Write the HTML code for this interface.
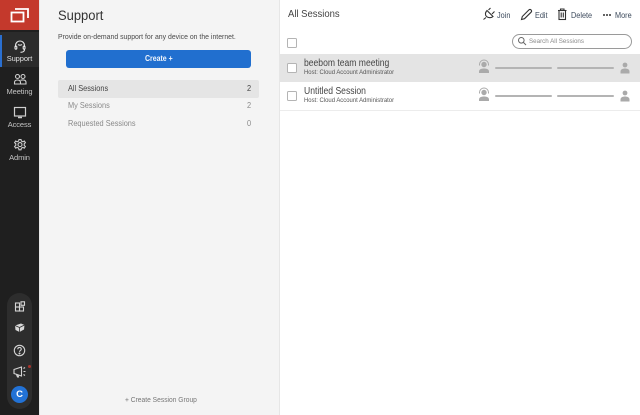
<!DOCTYPE html>
<html>
<head>
<meta charset="utf-8">
<style>
html,body{margin:0;padding:0;width:640px;height:415px;overflow:hidden;background:#fff;font-family:"Liberation Sans",sans-serif;}
.a{position:absolute;white-space:nowrap;transform-origin:0 50%;}
svg{position:absolute;overflow:visible;}
.nl{color:#c4c4c4;font-size:7.500px;letter-spacing:-.1px;width:39px;text-align:center;left:0;line-height:10px;font-weight:400;}
.lt{font-size:8.200px;line-height:10px;transform:scaleX(.9);}
.cb{position:absolute;width:8px;height:8px;border:1px solid #b4b4b4;border-radius:1.500px;background:#fff;left:286.500px;}
.ln{position:absolute;height:2px;background:#b4b4b4;border-radius:1px;}
.act{color:#3c4a5c;font-size:8.300px;line-height:10px;transform:scaleX(.88);}
.tt{font-size:9.700px;line-height:12px;color:#444;left:304px;transform:scaleX(.885);}
.ht{font-size:6.600px;line-height:8px;color:#555;left:304px;transform:scaleX(.9);}
</style>
</head>
<body>
<!-- sidebar -->
<div class="a" style="left:0;top:0;width:39px;height:415px;background:#1f1f1f;"></div>
<div class="a" style="left:0;top:0;width:39px;height:30px;background:#c4392c;"></div>
<svg style="left:0;top:0" width="39" height="30" fill="none" stroke="#fff" stroke-width="1.800">
<rect x="11.500" y="12.500" width="12" height="9"/>
<path d="M15 9H28V18"/>
</svg>
<div class="a" style="left:0;top:32px;width:39px;height:35px;background:#2b2b2b;"></div>
<div class="a" style="left:0;top:35px;width:2px;height:32px;background:#2a6fd0;"></div>

<svg style="left:13px;top:40px" width="14" height="14" fill="none" stroke="#e8e8e8" stroke-width="1.100">
<path d="M2.500 7V5.500a4.500 4.500 0 0 1 9 0V7"/>
<rect x="2" y="6" width="1.800" height="3.200" rx=".9"/>
<rect x="10.200" y="6" width="1.800" height="3.200" rx=".9"/>
<path d="M5 4.500c1 .9 3 .9 4 0M11.500 9.500c0 2-2 2.800-4 2.800"/>
</svg>
<div class="a nl" style="top:54px;color:#e0e0e0;">Support</div>

<svg style="left:13px;top:73px" width="14" height="14" fill="none" stroke="#cfcfcf" stroke-width="1.100">
<circle cx="4.500" cy="3.500" r="2"/><circle cx="10" cy="3.500" r="2"/>
<path d="M1.500 11V9.500c0-1.500 1-2.500 3-2.500s3 1 3 2.500V11zM7.500 7.300c.7-.3 1.500-.4 2.500-.4 2 0 3 1 3 2.500V11H7.500"/>
</svg>
<div class="a nl" style="top:87px;">Meeting</div>

<svg style="left:13px;top:106px" width="14" height="14" fill="none" stroke="#cfcfcf" stroke-width="1.200">
<rect x="1.500" y="1.500" width="11" height="8.500"/>
<path d="M5 11.500H9" stroke-width="1.500"/>
</svg>
<div class="a nl" style="top:120px;">Access</div>

<svg style="left:13px;top:138px" width="14" height="14" fill="none" stroke="#cfcfcf" stroke-width="1.100">
<path d="M6 1.500H8L8.400 3.100L9.900 3.800L11.300 3L12.400 4.700L11.200 5.800V7.400L12.400 8.500L11.300 10.200L9.900 9.400L8.400 10.100L8 11.800H6L5.600 10.100L4.100 9.400L2.700 10.200L1.600 8.500L2.800 7.400V5.800L1.600 4.700L2.700 3L4.100 3.800L5.600 3.100Z"/>
<circle cx="7" cy="6.600" r="2"/>
</svg>
<div class="a nl" style="top:153px;">Admin</div>

<div class="a" style="left:7px;top:293px;width:25px;height:116px;background:#2d2d2d;border-radius:12.500px;"></div>
<svg style="left:14px;top:301px" width="12" height="12" fill="none" stroke="#d4d4d4" stroke-width="1.100">
<rect x="1.500" y="6" width="4" height="4"/><rect x="5.500" y="6" width="4" height="4"/><rect x="1.500" y="2" width="4" height="4"/><rect x="7" y=".8" width="3.500" height="3.500"/>
</svg>
<svg style="left:14px;top:322px" width="12" height="12">
<path d="M1 3.500L7 1.500L10.500 3L10 7.500L5.500 10L1.500 8Z" fill="#d8d8d8"/>
<path d="M1 3.500L5.500 5.500V10M5.500 5.500L10.500 3" stroke="#2d2d2d" stroke-width=".8" fill="none"/>
</svg>
<svg style="left:13px;top:344px" width="13" height="13" fill="none" stroke="#d4d4d4" stroke-width="1.100">
<circle cx="6.500" cy="6.500" r="5.200"/>
<path d="M4.800 5.200c0-2.300 3.500-2.300 3.500-.1 0 1.300-1.800 1.400-1.800 2.800"/>
<circle cx="6.500" cy="9.500" r=".5" fill="#d4d4d4"/>
</svg>
<svg style="left:13px;top:365px" width="14" height="14" fill="none" stroke="#d4d4d4" stroke-width="1.100">
<path d="M1 4.500L8.500 2V11L1 8.500Z"/>
<path d="M3.500 9.500L4.500 12H5.500L5 10"/>
<path d="M10.500 3.500L12 2.500M10.500 6.500H12.500M10.500 9.500L12 10.500"/>
</svg>
<div class="a" style="left:28px;top:364.500px;width:3px;height:3px;border-radius:50%;background:#a8352c;"></div>
<div class="a" style="left:11px;top:386px;width:17px;height:17px;border-radius:50%;background:#2272d6;color:#fff;font-size:9.500px;font-weight:bold;line-height:17px;text-align:center;">C</div>

<!-- left panel -->
<div class="a" style="left:39px;top:0;width:1px;height:415px;background:#e8e8e8;"></div>
<div class="a" style="left:40px;top:0;width:239px;height:415px;background:#f4f4f4;"></div>
<div class="a" style="left:279px;top:0;width:1px;height:415px;background:#e6e6e6;"></div>
<div class="a" style="left:58px;top:7.500px;font-size:13.500px;transform:scaleX(.96);line-height:16px;color:#333;">Support</div>
<div class="a" style="left:58px;top:31.500px;font-size:7.600px;transform:scaleX(.908);line-height:10px;color:#4a4a4a;">Provide on-demand support for any device on the internet.</div>
<div class="a" style="left:66px;top:50px;width:185px;height:18px;background:#216fcf;border-radius:3px;"></div>
<div class="a" style="left:145px;top:50px;font-size:8.200px;transform:scaleX(.85);font-weight:bold;line-height:18px;color:#f2f6fc;">Create +</div>
<div class="a" style="left:58px;top:80px;width:201px;height:18px;background:#e5e5e5;border-radius:2px;"></div>
<div class="a lt" style="left:68px;top:84px;color:#444;">All Sessions</div>
<div class="a lt" style="left:247px;top:84px;color:#444;">2</div>
<div class="a lt" style="left:68px;top:101px;color:#8a8a8a;">My Sessions</div>
<div class="a lt" style="left:247px;top:101px;color:#8a8a8a;">2</div>
<div class="a lt" style="left:68px;top:119px;color:#8a8a8a;">Requested Sessions</div>
<div class="a lt" style="left:247px;top:119px;color:#8a8a8a;">0</div>
<div class="a" style="left:125px;top:395px;font-size:7.600px;transform:scaleX(.88);line-height:10px;color:#777;">+ Create Session Group</div>

<!-- right top -->
<div class="a" style="left:288px;top:8px;font-size:10.200px;transform:scaleX(.93);line-height:14px;color:#444;">All Sessions</div>
<svg style="left:482px;top:7px" width="14" height="14" fill="none" stroke="#333" stroke-width="1.100">
<path d="M5 3.500L11 9.500C9.500 11 6.500 11.200 4.500 9.500C3 8 3 5.500 5 3.500Z"/>
<path d="M6.500 3L8.500 1M10 7L12.500 4.500M4 10.500L1.500 12.500"/>
</svg>
<div class="a act" style="left:497px;top:9.500px;">Join</div>
<svg style="left:520px;top:8px" width="13" height="13" fill="none" stroke="#333" stroke-width="1.100">
<path d="M1.500 11.500L2.300 8.500L8.800 2C9.500 1.300 10.500 1.300 11.100 2C11.800 2.700 11.800 3.500 11.100 4.200L4.500 10.700Z"/>
</svg>
<div class="a act" style="left:535px;top:9.500px;">Edit</div>
<svg style="left:557px;top:8px" width="12" height="13" fill="none" stroke="#333" stroke-width="1.100">
<path d="M1 2.500H9.500M3.500 2.500V1H7V2.500"/>
<rect x="2" y="2.500" width="6.500" height="9"/>
<path d="M4.200 4.500V9.500M6.300 4.500V9.500"/>
</svg>
<div class="a act" style="left:571px;top:9.500px;">Delete</div>
<div class="a" style="left:603px;top:13.500px;width:2px;height:2px;border-radius:50%;background:#333;"></div>
<div class="a" style="left:606px;top:13.500px;width:2px;height:2px;border-radius:50%;background:#333;"></div>
<div class="a" style="left:609px;top:13.500px;width:2px;height:2px;border-radius:50%;background:#333;"></div>
<div class="a act" style="left:615px;top:9.500px;">More</div>

<div class="cb" style="top:37.500px;"></div>
<div class="a" style="left:512px;top:34px;width:118px;height:13px;border:1px solid #9a9a9a;border-radius:8px;background:#fff;"></div>
<svg style="left:517px;top:36px" width="10" height="10" fill="none" stroke="#666" stroke-width="1">
<circle cx="4.300" cy="4.300" r="2.800"/><path d="M6.400 6.400L9 9"/>
</svg>
<div class="a" style="left:529px;top:37px;font-size:6.700px;transform:scaleX(.93);line-height:9px;color:#8a8a8a;">Search All Sessions</div>

<!-- rows -->
<div class="a" style="left:280px;top:54px;width:360px;height:28px;background:#e4e4e4;"></div>
<div class="a" style="left:280px;top:110px;width:360px;height:1px;background:#ececec;"></div>
<div class="cb" style="top:63px;"></div>
<div class="cb" style="top:91px;"></div>
<div class="a tt" style="top:58px;">beebom team meeting</div>
<div class="a ht" style="top:69px;">Host: Cloud Account Administrator</div>
<div class="a tt" style="top:86px;">Untitled Session</div>
<div class="a ht" style="top:97px;">Host: Cloud Account Administrator</div>

<svg style="left:478px;top:59px" width="14" height="16">
<circle cx="6" cy="5.500" r="2.700" fill="#aaa"/>
<path d="M1.500 6.500V5.500a4.500 4.500 0 0 1 9 0V6.500" fill="none" stroke="#aaa" stroke-width="1"/>
<path d="M1 14V12.500C1 10.500 3 9.500 6 9.500S11 10.500 11 12.500V14Z" fill="#aaa"/>
</svg>
<div class="ln" style="left:495px;top:67px;width:57px;"></div>
<div class="ln" style="left:557px;top:67px;width:57px;"></div>
<svg style="left:620px;top:62px" width="11" height="12" fill="#aaa">
<circle cx="5" cy="3" r="2.400"/>
<path d="M.5 11.500V9.500C.5 7.500 2.500 6.500 5 6.500S9.500 7.500 9.500 9.500V11.500Z"/>
</svg>

<svg style="left:478px;top:87px" width="14" height="16">
<circle cx="6" cy="5.500" r="2.700" fill="#aaa"/>
<path d="M1.500 6.500V5.500a4.500 4.500 0 0 1 9 0V6.500" fill="none" stroke="#aaa" stroke-width="1"/>
<path d="M1 14V12.500C1 10.500 3 9.500 6 9.500S11 10.500 11 12.500V14Z" fill="#aaa"/>
</svg>
<div class="ln" style="left:495px;top:95px;width:57px;"></div>
<div class="ln" style="left:557px;top:95px;width:57px;"></div>
<svg style="left:620px;top:90px" width="11" height="12" fill="#aaa">
<circle cx="5" cy="3" r="2.400"/>
<path d="M.5 11.500V9.500C.5 7.500 2.500 6.500 5 6.500S9.500 7.500 9.500 9.500V11.500Z"/>
</svg>
</body>
</html>
